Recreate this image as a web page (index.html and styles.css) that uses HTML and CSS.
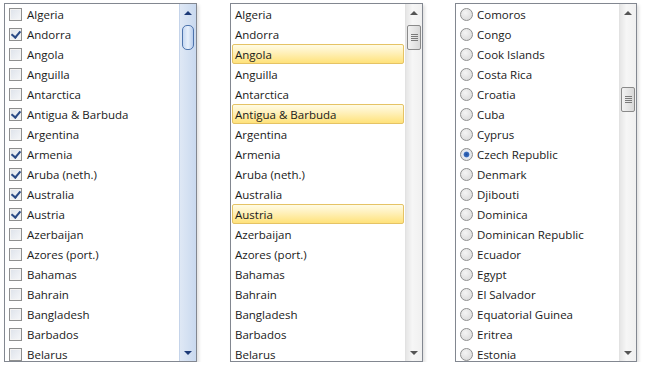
FILE: index.html
```html
<!DOCTYPE html>
<html>
<head>
<meta charset="utf-8">
<link rel="stylesheet" href="styles.css">
</head>
<body>
<div class="row">
  <div class="panel p1">
    <div class="list">
      <div class="item"><span class="cb"></span>Algeria</div>
      <div class="item"><span class="cb on"></span>Andorra</div>
      <div class="item"><span class="cb"></span>Angola</div>
      <div class="item"><span class="cb"></span>Anguilla</div>
      <div class="item"><span class="cb"></span>Antarctica</div>
      <div class="item"><span class="cb on"></span>Antigua &amp; Barbuda</div>
      <div class="item"><span class="cb"></span>Argentina</div>
      <div class="item"><span class="cb on"></span>Armenia</div>
      <div class="item"><span class="cb on"></span>Aruba (neth.)</div>
      <div class="item"><span class="cb on"></span>Australia</div>
      <div class="item"><span class="cb on"></span>Austria</div>
      <div class="item"><span class="cb"></span>Azerbaijan</div>
      <div class="item"><span class="cb"></span>Azores (port.)</div>
      <div class="item"><span class="cb"></span>Bahamas</div>
      <div class="item"><span class="cb"></span>Bahrain</div>
      <div class="item"><span class="cb"></span>Bangladesh</div>
      <div class="item"><span class="cb"></span>Barbados</div>
      <div class="item"><span class="cb"></span>Belarus</div>
    </div>
    <div class="sb blue">
      <div class="arr up"></div>
      <div class="track"><div class="thumb t1"></div></div>
      <div class="arr down"></div>
    </div>
  </div>

  <div class="panel p2">
    <div class="list">
      <div class="item plain">Algeria</div>
      <div class="item plain">Andorra</div>
      <div class="item plain sel">Angola</div>
      <div class="item plain">Anguilla</div>
      <div class="item plain">Antarctica</div>
      <div class="item plain sel">Antigua &amp; Barbuda</div>
      <div class="item plain">Argentina</div>
      <div class="item plain">Armenia</div>
      <div class="item plain">Aruba (neth.)</div>
      <div class="item plain">Australia</div>
      <div class="item plain sel">Austria</div>
      <div class="item plain">Azerbaijan</div>
      <div class="item plain">Azores (port.)</div>
      <div class="item plain">Bahamas</div>
      <div class="item plain">Bahrain</div>
      <div class="item plain">Bangladesh</div>
      <div class="item plain">Barbados</div>
      <div class="item plain">Belarus</div>
    </div>
    <div class="sb gray">
      <div class="arr up"></div>
      <div class="track"><div class="thumb t2"><i></i><i></i><i></i><i></i></div></div>
      <div class="arr down"></div>
    </div>
  </div>

  <div class="panel p3">
    <div class="list">
      <div class="item"><span class="rb"></span>Comoros</div>
      <div class="item"><span class="rb"></span>Congo</div>
      <div class="item"><span class="rb"></span>Cook Islands</div>
      <div class="item"><span class="rb"></span>Costa Rica</div>
      <div class="item"><span class="rb"></span>Croatia</div>
      <div class="item"><span class="rb"></span>Cuba</div>
      <div class="item"><span class="rb"></span>Cyprus</div>
      <div class="item"><span class="rb on"></span>Czech Republic</div>
      <div class="item"><span class="rb"></span>Denmark</div>
      <div class="item"><span class="rb"></span>Djibouti</div>
      <div class="item"><span class="rb"></span>Dominica</div>
      <div class="item"><span class="rb"></span>Dominican Republic</div>
      <div class="item"><span class="rb"></span>Ecuador</div>
      <div class="item"><span class="rb"></span>Egypt</div>
      <div class="item"><span class="rb"></span>El Salvador</div>
      <div class="item"><span class="rb"></span>Equatorial Guinea</div>
      <div class="item"><span class="rb"></span>Eritrea</div>
      <div class="item"><span class="rb"></span>Estonia</div>
    </div>
    <div class="sb gray">
      <div class="arr up"></div>
      <div class="track"><div class="thumb t3"><i></i><i></i><i></i><i></i></div></div>
      <div class="arr down"></div>
    </div>
  </div>
</div>
</body>
</html>
```

FILE: styles.css
```css
html, body {
  margin: 0;
  padding: 0;
  background: #ffffff;
}
body {
  font-family: "Open Sans", "Noto Sans", sans-serif;
  font-size: 11.5px;
  color: #1a1a1a;
}
.row {
  display: flex;
  padding: 3px 0 0 4px;
  align-items: flex-start;
}
.panel {
  box-sizing: border-box;
  height: 359px;
  border: 1px solid #828790;
  display: flex;
  background: #fff;
  box-shadow: 2px 2px 3px rgba(0,0,0,0.12);
}
.p1 { width: 193px; }
.p2 { width: 193px; margin-left: 33px; }
.p3 { width: 182px; margin-left: 32px; }

.list {
  flex: 1;
  overflow: hidden;
  padding-top: 0;
}
.item {
  height: 20px;
  display: flex;
  align-items: center;
  white-space: nowrap;
  padding-left: 4px;
  box-sizing: border-box;
}
.item.plain { padding-left: 4px; margin-right: 1px; }
.item.sel {
  border: 1px solid #e5c365;
  border-radius: 2px;
  background: linear-gradient(#fffbe4 0%, #fff0b8 45%, #ffe27a 100%);
  margin-left: 1px;
}
.item.plain.sel { padding-left: 2px; }

.cb {
  width: 11px;
  height: 11px;
  border: 1px solid #8e8f8f;
  margin-right: 5px;
  background: linear-gradient(135deg, #dde2ea, #f6f7f9);
  box-shadow: inset 0 0 0 1px #f4f4f4;
  position: relative;
  flex: none;
}
.cb.on::after {
  content: "";
  position: absolute;
  left: 3px;
  top: 0px;
  width: 4px;
  height: 7px;
  border-right: 2px solid #2a4a86;
  border-bottom: 2px solid #2a4a86;
  transform: rotate(40deg);
}
.rb {
  width: 11px;
  height: 11px;
  border: 1px solid #8e8f8f;
  border-radius: 50%;
  margin-right: 4px;
  background: radial-gradient(circle at 40% 35%, #f4f4f4, #d4d4d4);
  position: relative;
  flex: none;
}
.rb.on {
  background: radial-gradient(circle at 50% 50%, #1e4c9c 0, #3a6ec0 2.5px, #e6ecf5 3.3px, #e0e0e0 6px);
}

.sb {
  display: flex;
  flex-direction: column;
  flex: none;
  width: 16px;
}
.sb.blue {
  background: linear-gradient(90deg, #dfe8f5, #c9d9ef);
  border-left: 1px solid #c5d4ea;
}
.sb.gray {
  background: linear-gradient(90deg, #e6e6e6, #f6f6f6 40%, #f0f0f0);
  border-left: 1px solid #e2e2e2;
}
.arr {
  height: 17px;
  display: flex;
  align-items: center;
  justify-content: center;
  flex: none;
}
.arr::after {
  content: "";
  width: 0;
  height: 0;
  border-left: 4px solid transparent;
  border-right: 4px solid transparent;
}
.arr.up::after { border-bottom: 4px solid #555; }
.arr.down::after { border-top: 4px solid #555; }
.blue .arr.up::after { border-bottom-color: #1c3a78; }
.blue .arr.down::after { border-top-color: #1c3a78; }
.track { flex: 1; }
.thumb {
  box-sizing: border-box;
  margin-left: 1px;
  width: 14px;
  height: 25px;
  display: flex;
  flex-direction: column;
  align-items: center;
  justify-content: center;
  gap: 1px;
}
.thumb i {
  display: block;
  width: 7px;
  height: 1px;
  background: #7a7a7a;
}
.t1 {
  margin-top: 4px;
  margin-left: 2px;
  width: 12px;
  border: 1px solid #4e74ad;
  border-radius: 5px;
  background: linear-gradient(90deg, #c6d8f2, #e8f0fb 50%, #b6ccec);
}
.t2 {
  margin-top: 4px;
  border: 1px solid #8a8a8a;
  border-radius: 2px;
  background: linear-gradient(90deg, #f2f2f2, #e6e6e6 50%, #d8d8d8);
}
.t3 {
  margin-top: 66px;
  border: 1px solid #8a8a8a;
  border-radius: 2px;
  background: linear-gradient(90deg, #f2f2f2, #e6e6e6 50%, #d8d8d8);
}
```
